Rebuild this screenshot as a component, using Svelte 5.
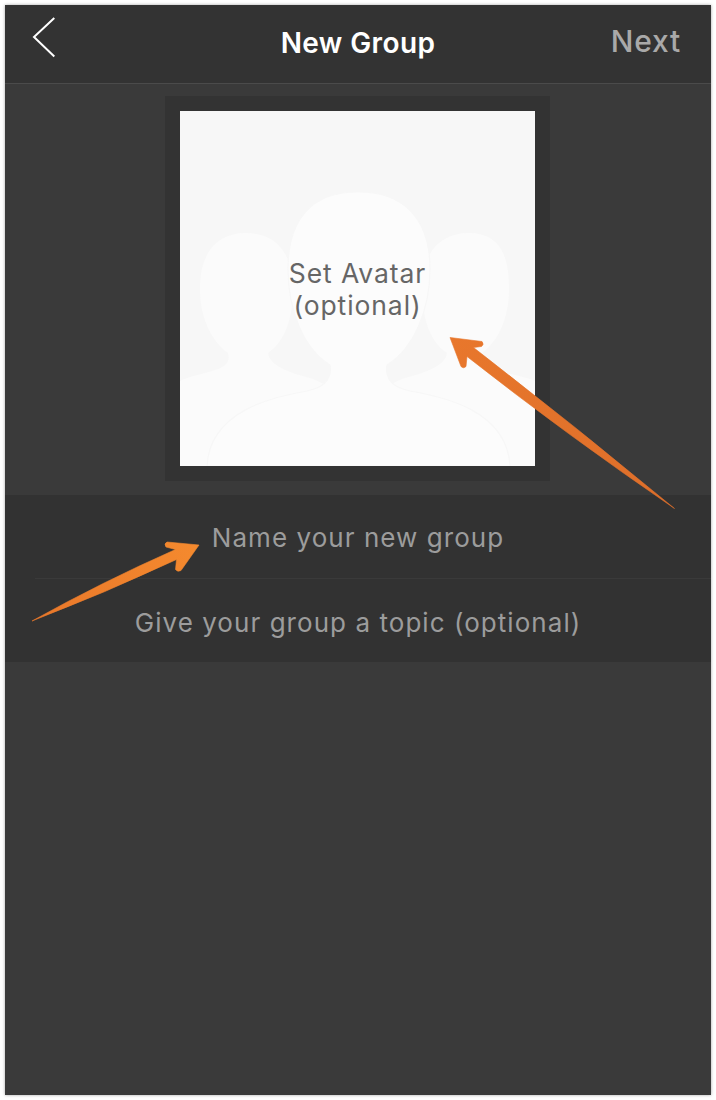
<script>
  const rows = ['Name your new group', 'Give your group a topic (optional)'];
</script>

<div class="page">
  <div class="screen">
    <header class="bar">
      <button class="back" aria-label="Back">
        <svg width="24" height="42" viewBox="0 0 24 42" fill="none">
          <path d="M22.3 2 2 21 22.3 40.5" stroke="#fff" stroke-width="2"/>
        </svg>
      </button>
      <h1>New Group</h1>
      <span class="next">Next</span>
    </header>

    <div class="frame">
      <div class="avatar">
        <svg class="people" viewBox="0 0 355 355" aria-hidden="true">
          <path class="side" d="M66 122C38 122 20 140 20 178C20 208 32 230 48 242C50 250 47 255 38 258C24 263 10 265 0 270V355H170V285L133 268C112 262 90 256 88 242C106 230 113 205 113 178C113 140 94 122 66 122Z"/>
          <path class="side" d="M289 122C317 122 329 140 329 178C329 208 318 230 302 242C300 250 303 255 312 258C326 263 345 265 355 270V355H185V285L222 268C243 262 265 256 267 242C249 230 242 205 242 178C242 140 261 122 289 122Z"/>
          <path class="main" d="M178 81C130 81 108 110 108 158C108 200 124 238 150 254C152 266 146 276 127 280C92 286 30 300 27 355H330C327 300 265 286 230 280C211 276 205 266 207 254C233 238 250 200 250 158C250 110 226 81 178 81Z"/>
        </svg>
        <p class="label">Set Avatar<br />(optional)</p>
      </div>
    </div>

    <div class="form">
      {#each rows as row, i}
        <div class="row" class:ruled={i > 0}>{row}</div>
      {/each}
    </div>
  </div>

  <svg class="arrows" width="716" height="1100" viewBox="0 0 716 1100" aria-hidden="true">
    <defs>
      <linearGradient id="a1" x1="450" y1="337" x2="674" y2="508" gradientUnits="userSpaceOnUse">
        <stop offset="0" stop-color="#e8772c" />
        <stop offset="1" stop-color="#dd6e2a" />
      </linearGradient>
      <linearGradient id="a2" x1="199" y1="545" x2="32" y2="621" gradientUnits="userSpaceOnUse">
        <stop offset="0" stop-color="#f58a2e" />
        <stop offset="1" stop-color="#e8772a" />
      </linearGradient>
    </defs>
    <path d="M450 337.500 482 341.500Q484.500 344.500 481.500 346.500L473.500 347.500Q575 426 674.500 508.500Q567 435 467 356.500L466 366.500Q463.500 369 461 366.500Z" fill="url(#a1)" stroke="url(#a1)" stroke-width="0.6" stroke-linejoin="round"/>
    <path d="M199 545 181 570.500Q177.500 572.500 175.500 569.500L176.500 559.500Q105 593 32 621Q102 582 175.500 549.500L166 547Q163.500 543.500 167 542Z" fill="url(#a2)" stroke="url(#a2)" stroke-width="0.6" stroke-linejoin="round"/>
  </svg>
</div>

<style>
  :global(body) {
    margin: 0;
    background: #fff;
  }

  .page {
    position: relative;
    width: 716px;
    height: 1100px;
    padding: 5px;
    box-sizing: border-box;
    font-family: Inter, 'Liberation Sans', sans-serif;
  }

  .screen {
    width: 706px;
    height: 1090px;
    background: #3a3a3a;
    box-shadow: 0 0 3px rgba(0, 0, 0, 0.35);
    display: flex;
    flex-direction: column;
    align-items: center;
  }

  .bar {
    position: relative;
    align-self: stretch;
    height: 75px;
    padding-bottom: 3px;
    background: #333;
    border-bottom: 1px solid #4b4b4b;
    display: flex;
    align-items: center;
    justify-content: center;
  }

  .back {
    position: absolute;
    left: 27px;
    top: 11px;
    padding: 0;
    border: 0;
    background: none;
    line-height: 0;
  }

  h1 {
    margin: 0;
    font-size: 28px;
    font-weight: 600;
    color: #fff;
    letter-spacing: 0.4px;
  }

  .next {
    position: absolute;
    right: 30px;
    top: 18px;
    font-size: 30px;
    font-weight: 500;
    line-height: 36px;
    color: #a9a9a9;
    letter-spacing: 0.8px;
  }

  .frame {
    margin-top: 12px;
    margin-right: 1px;
    padding: 15px;
    background: #333;
    line-height: 0;
  }

  .avatar {
    position: relative;
    width: 355px;
    height: 355px;
    background: #f7f7f7;
    display: flex;
    align-items: center;
    justify-content: center;
  }

  .people {
    position: absolute;
    inset: 0;
    width: 100%;
    height: 100%;
  }

  .side {
    fill: #fbfbfb;
  }

  .main {
    fill: #fcfcfc;
    stroke: #f7f7f7;
    stroke-width: 1.2;
  }

  .label {
    position: relative;
    margin: 0;
    font-size: 26.500px;
    line-height: 32px;
    letter-spacing: 0.9px;
    text-align: center;
    color: #666;
  }

  .form {
    margin-top: 14px;
    align-self: stretch;
    background: #323232;
  }

  .row {
    height: 83px;
    box-sizing: border-box;
    padding-top: 2px;
    display: flex;
    align-items: center;
    justify-content: center;
    font-size: 26px;
    letter-spacing: 1.05px;
    color: #9c9c9c;
  }

  .ruled {
    position: relative;
    height: 84px;
    padding-top: 5px;
  }

  .ruled::before {
    content: '';
    position: absolute;
    left: 30px;
    right: 0;
    top: 0;
    height: 1px;
    background: #3a3a3a;
  }

  .arrows {
    position: absolute;
    inset: 0;
    pointer-events: none;
  }
</style>
